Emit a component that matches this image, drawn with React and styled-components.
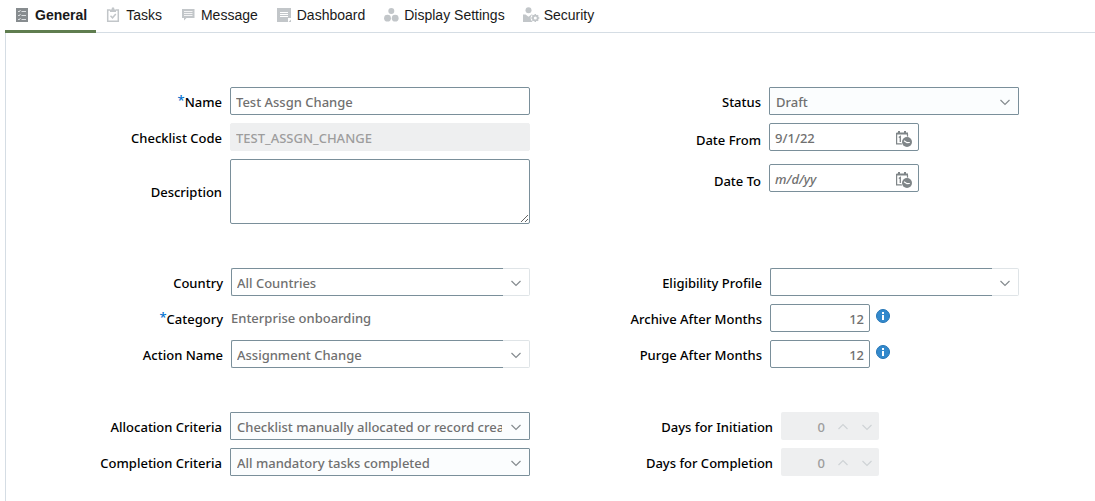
import React, { useState } from 'react'
import styled, { createGlobalStyle } from 'styled-components';

const GlobalStyle = createGlobalStyle`
  * {
    box-sizing: border-box;
  }
  body {
    margin: 0;
    background-color: #ffffff;
  }
  input, select, textarea, button {
    font: inherit;
    margin: 0;
  }
`;

const GeneralIcon = () => (
  <svg viewBox="0 0 16 16" fill="#878c8f">
    <path d="M1 1h12v14H1z" />
    <path d="M3 4l1 1 1.500-2M3 8l1 1 1.500-2M3 12l1 1 1.500-2M6.500 4.500H11M6.500 8.500H11M6.500 12.500H11" fill="none" stroke="#dcdfe1" strokeWidth="1" />
  </svg>
);

const TasksIcon = () => (
  <svg viewBox="0 0 16 16" fill="none" stroke="#c2c6c9" strokeWidth="1.500">
    <path d="M4 3H1.700v11.300h10.600V3H10" />
    <path d="M4 5V2.500h1.500L6 .5h2l.5 2H10V5z" fill="#c2c6c9" stroke="none" />
    <path d="M4.500 8.800l2 2L9.800 7" />
  </svg>
);

const MessageIcon = () => (
  <svg viewBox="0 0 16 16" fill="#c2c6c9">
    <path d="M1 2h12.500v9H5.500L3 13.500V11H1z" />
    <path d="M3 4.500h8.500M3 6.500h8.500M3 8.500h8.500" stroke="#fff" strokeWidth=".8" />
  </svg>
);

const DashboardIcon = () => (
  <svg viewBox="0 0 16 16" fill="#c2c6c9">
    <path d="M0 1h14v10h-3v4H0z" />
    <path d="M3 5.500h8M3 7.500h8M3 9.500h8" stroke="#fff" />
    <path d="M11.500 15l2.500-2.500V15z" />
  </svg>
);

const DisplayIcon = () => (
  <svg viewBox="0 0 16 16" fill="#c2c6c9">
    <circle cx="7.300" cy="4" r="3" />
    <circle cx="3.500" cy="11.200" r="3.400" />
    <circle cx="11.200" cy="11.200" r="3.400" />
  </svg>
);

const SecurityIcon = () => (
  <svg viewBox="0 0 16 16" fill="#c2c6c9">
    <circle cx="4.500" cy="3.200" r="3" />
    <path d="M-1 7.500h2.500l3 2.200 3-2.200h1.500v7.500H-1z" />
    <circle cx="11.300" cy="11" r="4.700" fill="#fff" />
    <circle cx="11.300" cy="11" r="2.500" fill="none" stroke="#c2c6c9" strokeWidth="1.600" />
    <path d="M11.300 7v8M7.300 11h8M8.500 8.200l5.600 5.600M14.100 8.200l-5.600 5.600" stroke="#c2c6c9" strokeWidth="1.500" />
    <circle cx="11.300" cy="11" r="1.500" fill="#fff" />
  </svg>
);

const Chevron = ({ up }) => (
  <svg width="12" height="8" viewBox="0 0 12 8" fill="none" stroke="currentColor" strokeWidth="1.200">
    <path d={up ? "M1.500 6L6 1.500 10.500 6" : "M1.500 2L6 6.500 10.500 2"} />
  </svg>
);

const CalendarIcon = () => (
  <svg width="18" height="18" viewBox="0 0 18 18" fill="none" stroke="#7f8588">
    <path d="M1.500 3.500h11.500M4 1v3M10 1v3" strokeWidth="2" />
    <path d="M1.600 3v10.900h5.500M12.500 4v3" strokeWidth="1.200" />
    <path d="M3.800 7.500L5.300 6.500V12" strokeWidth="1.300" />
    <circle cx="12" cy="12" r="5.500" fill="#fff" stroke="none" />
    <circle cx="12" cy="12" r="5" fill="#7f8588" stroke="none" />
    <path d="M9 10.800l3 1.900 2.800-.2" stroke="#fff" strokeWidth="1.200" />
  </svg>
);

const InfoIcon = () => (
  <svg width="14" height="14" viewBox="0 0 14 14">
    <circle cx="7" cy="7" r="6.500" fill="#3389cc" stroke="#2474b5" />
    <path d="M6 6h2v5H6zM6 3h2v2H6z" fill="#fff" />
  </svg>
);

const tabs = [
  { title: "General", icon: <GeneralIcon /> },
  { title: "Tasks", icon: <TasksIcon /> },
  { title: "Message", icon: <MessageIcon /> },
  { title: "Dashboard", icon: <DashboardIcon /> },
  { title: "Display Settings", icon: <DisplayIcon /> },
  { title: "Security", icon: <SecurityIcon /> }
]

const Field = ({ id, label, required, tall, children }) => (
  <Row $tall={tall}>
    <Label htmlFor={id}>
      {required && <Star>*</Star>}
      {label}
    </Label>
    <Control>{children}</Control>
  </Row>
);

const Select = ({ id, value }) => (
  <SelectWrap>
    <select id={id} defaultValue={value}>
      <option>{value}</option>
    </select>
    <Chevron />
  </SelectWrap>
);

const Combo = ({ id, label, value }) => (
  <ComboWrap>
    <TextInput id={id} role="combobox" aria-expanded="false" defaultValue={value} />
    <button type="button" aria-label={`Search ${label}`}><Chevron /></button>
  </ComboWrap>
);

const DateInput = ({ id, value }) => (
  <DateWrap>
    <input id={id} type="text" defaultValue={value} placeholder="m/d/yy" />
    <button type="button" aria-label="Select Date and Time"><CalendarIcon /></button>
  </DateWrap>
);

const Months = ({ id, value }) => (
  <MonthsWrap>
    <TextInput id={id} defaultValue={value} />
    <button type="button" aria-label="Help"><InfoIcon /></button>
  </MonthsWrap>
);

const Spinner = ({ id }) => (
  <SpinnerWrap>
    <input id={id} defaultValue="0" disabled />
    <button type="button" aria-label="Increment" disabled><Chevron up /></button>
    <button type="button" aria-label="Decrement" disabled><Chevron /></button>
  </SpinnerWrap>
);

const App = () => {
  const [active, setActive] = useState("General");

  return (
    <Page>
      <GlobalStyle />
      <TabBar role="tablist">
        {
          tabs.map(({ title, icon }) => (
            <Tab
              key={title}
              type="button"
              role="tab"
              aria-selected={active === title}
              $active={active === title}
              onClick={() => setActive(title)}
            >
              {icon}
              {title}
            </Tab>
          ))
        }
      </TabBar>
      <Panel>
        <Group>
          <Column $label={216}>
            <Field id="name" label="Name" required>
              <TextInput id="name" defaultValue="Test Assgn Change" />
            </Field>
            <Field id="code" label="Checklist Code">
              <TextInput id="code" defaultValue="TEST_ASSGN_CHANGE" disabled />
            </Field>
            <Field id="description" label="Description">
              <TextArea id="description" />
            </Field>
          </Column>
          <Column $label={211}>
            <Field id="status" label="Status">
              <Select id="status" value="Draft" />
            </Field>
            <Field id="from" label="Date From" tall>
              <DateInput id="from" value="9/1/22" />
            </Field>
            <Field id="to" label="Date To" tall>
              <DateInput id="to" />
            </Field>
          </Column>
        </Group>
        <Group>
          <Column $label={217}>
            <Field id="country" label="Country">
              <Combo id="country" label="Country" value="All Countries" />
            </Field>
            <Field id="category" label="Category" required>
              <Output id="category">Enterprise onboarding</Output>
            </Field>
            <Field id="action" label="Action Name">
              <Combo id="action" label="Action Name" value="Assignment Change" />
            </Field>
          </Column>
          <Column $label={212}>
            <Field id="profile" label="Eligibility Profile">
              <Combo id="profile" label="Eligibility Profile" />
            </Field>
            <Field id="archive" label="Archive After Months">
              <Months id="archive" value="12" />
            </Field>
            <Field id="purge" label="Purge After Months">
              <Months id="purge" value="12" />
            </Field>
          </Column>
        </Group>
        <Group>
          <Column $label={216}>
            <Field id="allocation" label="Allocation Criteria">
              <Select id="allocation" value="Checklist manually allocated or record created" />
            </Field>
            <Field id="completion" label="Completion Criteria">
              <Select id="completion" value="All mandatory tasks completed" />
            </Field>
          </Column>
          <Column $label={223}>
            <Field id="initiationDays" label="Days for Initiation">
              <Spinner id="initiationDays" />
            </Field>
            <Field id="completionDays" label="Days for Completion">
              <Spinner id="completionDays" />
            </Field>
          </Column>
        </Group>
      </Panel>
    </Page>
  );
}

const Page = styled.div`
  display: flex;
  flex-direction: column;
  min-height: 100vh;
  padding-left: 5px;
  font-family: "Noto Sans", "Open Sans", sans-serif;
  font-size: 13px;
  font-weight: 500;
  line-height: 20px;
  color: #000000;
`;

const TabBar = styled.div`
  display: flex;
  box-shadow: inset 0 -1px 0 #d5dde4;
`;

const Tab = styled.button`
  display: flex;
  align-items: center;
  gap: 4px;
  height: 33px;
  padding: 0 9px 0 10px;
  border: none;
  border-bottom: 3px solid ${({ $active }) => $active ? "#5f7d4f" : "transparent"};
  background: none;
  color: #1a1a1a;
  font-family: "Liberation Sans", Arial, sans-serif;
  font-size: 14px;
  font-weight: ${({ $active }) => $active ? 700 : 400};
  white-space: nowrap;
  cursor: pointer;
  svg {
    width: 16px;
    height: 16px;
    flex: none;
    overflow: visible;
  }
`;

const Panel = styled.main`
  flex: 1;
  display: flex;
  flex-direction: column;
  gap: 44px;
  padding: 54px 76px 24px 0;
  border-left: 1px solid #d5dde4;
`;

const Group = styled.section`
  display: grid;
  grid-template-columns: minmax(0, 524fr) minmax(0, 469fr);
  gap: 20px;
`;

const Column = styled.div`
  display: grid;
  grid-template-columns: ${({ $label }) => $label}px minmax(0, 1fr);
  align-content: start;
  gap: 8px;
`;

const Row = styled.div`
  display: grid;
  grid-template-columns: subgrid;
  grid-column: 1 / -1;
  align-items: center;
  min-height: ${({ $tall }) => $tall ? "33px" : "28px"};
`;

const Label = styled.label`
  padding-top: 1px;
  text-align: right;
`;

const Star = styled.span`
  color: #0572ce;
  line-height: 1;
  vertical-align: 2px;
`;

const Control = styled.div`
  align-self: start;
  min-width: 0;
`;

const TextInput = styled.input`
  display: block;
  width: 100%;
  height: 28px;
  padding: 2px 5px 0;
  border: 1px solid #7a8f9a;
  border-radius: 2px;
  background-color: #ffffff;
  color: #707070;
  &:disabled {
    border-color: #eeeff0;
    background-color: #eeeff0;
    color: #9d9d9d;
  }
`;

const TextArea = styled.textarea`
  display: block;
  width: 100%;
  height: 65px;
  padding: 4px 5px;
  border: 1px solid #7a8f9a;
  border-radius: 2px;
  color: #707070;
`;

const Output = styled.output`
  display: block;
  padding: 4px 0;
  color: #707070;
`;

const SelectWrap = styled.div`
  position: relative;
  color: #858b8f;
  select {
    display: block;
    width: 100%;
    height: 28px;
    padding: 2px 27px 0 6px;
    border: 1px solid #7a8f9a;
    border-radius: 1px;
    appearance: none;
    background-color: #fbfdfe;
    color: #707070;
  }
  svg {
    position: absolute;
    top: 11px;
    right: 8px;
    pointer-events: none;
  }
`;

const ComboWrap = styled.div`
  display: flex;
  ${TextInput} {
    flex: 1;
    min-width: 0;
    border-right: none;
    border-radius: 2px 0 0 2px;
  }
  button {
    display: flex;
    align-items: center;
    justify-content: center;
    width: 27px;
    height: 28px;
    padding: 2px 0 0;
    border: 1px solid #dfe4e7;
    border-left: none;
    border-radius: 0 2px 2px 0;
    background-color: #ffffff;
    color: #858b8f;
  }
`;

const DateWrap = styled.div`
  display: flex;
  align-items: center;
  width: 150px;
  height: 28px;
  border: 1px solid #7a8f9a;
  border-radius: 2px;
  input {
    flex: 1;
    min-width: 0;
    padding: 2px 5px 0;
    border: none;
    background: none;
    color: #707070;
    &::placeholder {
      color: #707070;
      font-style: italic;
      opacity: 1;
    }
  }
  button {
    display: flex;
    padding: 3px 5px 0 0;
    border: none;
    background: none;
  }
`;

const MonthsWrap = styled.div`
  display: flex;
  gap: 6px;
  ${TextInput} {
    width: 100px;
    text-align: right;
  }
  button {
    display: flex;
    padding: 5px 0 0;
    border: none;
    background: none;
  }
`;

const SpinnerWrap = styled.div`
  display: flex;
  width: 98px;
  height: 28px;
  border-radius: 2px;
  background-color: #eeeff0;
  input {
    width: 50px;
    padding: 2px 6px 0;
    border: none;
    background: none;
    color: #9d9d9d;
    text-align: right;
  }
  button {
    display: flex;
    align-items: center;
    justify-content: center;
    width: 24px;
    padding: 2px 0 0;
    border: none;
    background: none;
    color: #cfd3d6;
  }
`;

export default App;
